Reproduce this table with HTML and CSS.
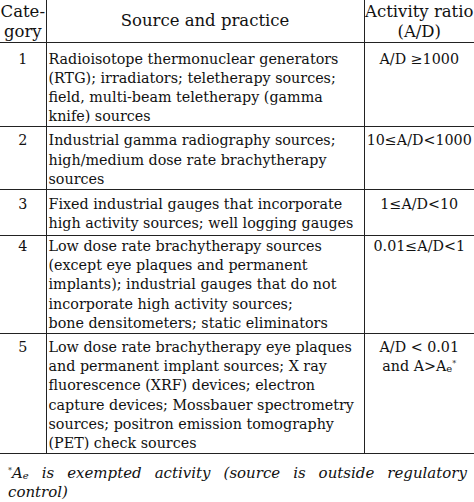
FILE: index.html
```html
<!DOCTYPE html>
<html>
<head>
<meta charset="utf-8">
<link rel="stylesheet" href="styles.css">
</head>
<body>
<table class="tbl">
  <colgroup>
    <col class="c1">
    <col class="c2">
    <col class="c3">
  </colgroup>
  <thead>
    <tr class="hr">
      <th class="cat">Cate-<br>gory</th>
      <th class="src">Source and practice</th>
      <th class="act">Activity ratio<br>(A/D)</th>
    </tr>
  </thead>
  <tbody>
    <tr class="r1">
      <td class="num">1</td>
      <td class="txt">Radioisotope thermonuclear generators<br>(RTG); irradiators; teletherapy sources;<br>field, multi-beam teletherapy (gamma<br>knife) sources</td>
      <td class="ratio">A/D ≥1000</td>
    </tr>
    <tr class="r2">
      <td class="num">2</td>
      <td class="txt">Industrial gamma radiography sources;<br>high/medium dose rate brachytherapy<br>sources</td>
      <td class="ratio">10≤A/D&lt;1000</td>
    </tr>
    <tr class="r3">
      <td class="num">3</td>
      <td class="txt">Fixed industrial gauges that incorporate<br>high activity sources; well logging gauges</td>
      <td class="ratio">1≤A/D&lt;10</td>
    </tr>
    <tr class="r4">
      <td class="num">4</td>
      <td class="txt">Low dose rate brachytherapy sources<br>(except eye plaques and permanent<br>implants); industrial gauges that do not<br>incorporate high activity sources;<br>bone densitometers; static eliminators</td>
      <td class="ratio">0.01≤A/D&lt;1</td>
    </tr>
    <tr class="r5">
      <td class="num">5</td>
      <td class="txt">Low dose rate brachytherapy eye plaques<br>and permanent implant sources; X ray<br>fluorescence (XRF) devices; electron<br>capture devices; Mossbauer spectrometry<br>sources; positron emission tomography<br>(PET) check sources</td>
      <td class="ratio">A/D &lt; 0.01<br>and A&gt;A<span class="sub">e</span><sup class="ast">*</sup></td>
    </tr>
  </tbody>
</table>
<div class="note">
  <div class="line1"><sup class="ast">*</sup>A<span class="sub">e</span> is exempted activity (source is outside regulatory</div>
  <div class="line2">control)</div>
</div>
</body>
</html>
```
FILE: styles.css
```css
html, body {
  margin: 0;
  padding: 0;
  background: #fff;
  overflow: hidden;
}
body {
  width: 474px;
  height: 502px;
  font-family: "DejaVu Serif", serif;
  font-size: 14.3px;
  color: #111;
}
.tbl {
  border-collapse: collapse;
  table-layout: fixed;
  width: 474px;
}
.c1 { width: 46px; }
.c2 { width: 318px; }
.c3 { width: 110px; }
.tbl th, .tbl td {
  border: 1px solid #222;
  padding: 0;
  vertical-align: top;
  line-height: 19.2px;
  white-space: nowrap;
  font-weight: normal;
}
.tbl tr > :first-child { border-left: none; }
.tbl tr > :last-child { border-right: none; }
.tbl thead th {
  border-top: none;
  font-size: 16.5px;
  line-height: 19.5px;
  padding-top: 2px;
  text-align: center;
}
.hr { height: 42px; }
.tbl .hr .src { vertical-align: middle; padding-top: 0; }
.tbl .num { text-align: center; }
.tbl .txt { padding-left: 2px; text-align: left; }
.tbl .ratio { text-align: center; }
.tbl .r1 td { padding-top: 7px; }
.tbl .r2 td { padding-top: 4px; }
.tbl .r3 td { padding-top: 5px; }
.tbl .r4 td { padding-top: 1px; }
.tbl .r5 td { padding-top: 4px; }
.r1 { height: 83px; }
.r2 { height: 62px; }
.r3 { height: 46px; }
.r4 { height: 97px; }
.r5 { height: 120px; }
.sub {
  font-size: 10px;
  vertical-align: -1px;
  line-height: 0;
}
.ast {
  font-size: 8px;
  vertical-align: 5px;
  line-height: 0;
}
.note {
  font-style: italic;
  font-size: 15px;
  padding: 10px 7px 0 8px;
  line-height: 19px;
}
.line1 {
  text-align: justify;
  text-align-last: justify;
}
```
